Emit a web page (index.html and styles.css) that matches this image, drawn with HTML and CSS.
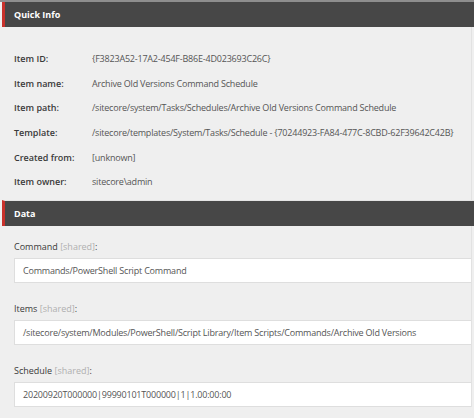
FILE: index.html
```html
<!DOCTYPE html>
<html>
<head>
<meta charset="utf-8">
<link rel="stylesheet" href="styles.css">
</head>
<body>
<div class="topbar"></div>
<div class="section-head">Quick Info</div>
<div class="panel quick">
  <div class="row"><div class="lbl">Item ID:</div><div class="val">{F3823A52-17A2-454F-B86E-4D023693C26C}</div></div>
  <div class="row"><div class="lbl">Item name:</div><div class="val">Archive Old Versions Command Schedule</div></div>
  <div class="row"><div class="lbl">Item path:</div><div class="val">/sitecore/system/Tasks/Schedules/Archive Old Versions Command Schedule</div></div>
  <div class="row"><div class="lbl">Template:</div><div class="val">/sitecore/templates/System/Tasks/Schedule - {70244923-FA84-477C-8CBD-62F39642C42B}</div></div>
  <div class="row"><div class="lbl">Created from:</div><div class="val">[unknown]</div></div>
  <div class="row"><div class="lbl">Item owner:</div><div class="val">sitecore\admin</div></div>
</div>
<div class="section-head data-head">Data</div>
<div class="panel data">
  <div class="field">
    <div class="flabel">Command <span class="shared">[shared]</span>:</div>
    <div class="finput">Commands/PowerShell Script Command</div>
  </div>
  <div class="field">
    <div class="flabel">Items <span class="shared">[shared]</span>:</div>
    <div class="finput">/sitecore/system/Modules/PowerShell/Script Library/Item Scripts/Commands/Archive Old Versions</div>
  </div>
  <div class="field">
    <div class="flabel">Schedule <span class="shared">[shared]</span>:</div>
    <div class="finput">20200920T000000|99990101T000000|1|1.00:00:00</div>
  </div>
</div>
</body>
</html>
```
FILE: styles.css
```css
html, body {
  margin: 0;
  padding: 0;
}
body {
  background: #efefef;
  font-family: "Open Sans", "Liberation Sans", sans-serif;
  font-size: 9px;
  color: #444;
  overflow: hidden;
  width: 474px;
  height: 418px;
}
.topbar {
  height: 2px;
  background: #8e8e8e;
}
.section-head {
  margin-left: 2px;
  height: 25px;
  line-height: 25px;
  background: #474747;
  border-left: 3px solid #c8312b;
  color: #fff;
  font-weight: 700;
  font-size: 9px;
  padding-left: 9px;
}
.panel {
  width: 472px;
  box-sizing: border-box;
  border-right: 1px solid #e2e2e2;
}
.quick {
  padding-top: 19px;
  padding-bottom: 6px;
}
.row {
  display: flex;
  height: 24.7px;
  align-items: center;
  padding-left: 14px;
}
.lbl {
  width: 78px;
  font-weight: 600;
  color: #3a3a3a;
}
.val {
  color: #555;
  white-space: nowrap;
  letter-spacing: -0.2px;
}
.data-head {
  border-top: 1px solid #e4e4e4;
}
.data {
  padding: 10px 0 0 14px;
}
.field {
  margin-bottom: 15px;
}
.flabel {
  height: 22px;
  line-height: 22px;
  color: #3a3a3a;
}
.shared {
  color: #b0b0b0;
}
.finput {
  height: 25px;
  line-height: 23px;
  box-sizing: border-box;
  background: #fff;
  border: 1px solid #dedede;
  border-right: none;
  padding-left: 8px;
  color: #555;
  white-space: nowrap;
  letter-spacing: -0.2px;
}
```
